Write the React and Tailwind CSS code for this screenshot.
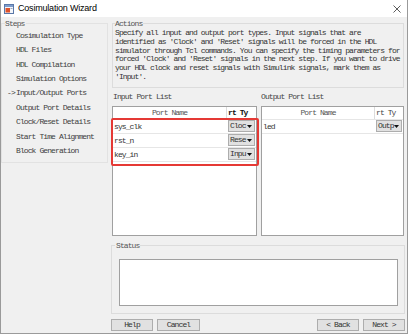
const mono = "font-['Liberation_Mono',monospace] text-[8px] tracking-[-0.9px]";

const steps = [
  "Cosimulation Type",
  "HDL Files",
  "HDL Compilation",
  "Simulation Options",
  "Input/Output Ports",
  "Output Port Details",
  "Clock/Reset Details",
  "Start Time Alignment",
  "Block Generation",
];

const actionLines = [
  "Specify all input and output port types. Input signals that are",
  "identified as 'Clock' and 'Reset' signals will be forced in the HDL",
  "simulator through Tcl commands. You can specify the timing parameters for",
  "forced 'Clock' and 'Reset' signals in the next step. If you want to drive",
  "your HDL clock and reset signals with Simulink signals, mark them as",
  "'Input'.",
];

function Arrow() {
  return (
    <svg width="5" height="3" viewBox="0 0 5 3" className="shrink-0">
      <path d="M0 0 L5 0 L2.5 3 Z" fill="#111" />
    </svg>
  );
}

function Combo({ text }) {
  return (
    <div className="h-[12px] w-full border border-[#adadad] bg-[#e1e1e1] flex items-center pl-[1px] pr-[2px]">
      <span className="whitespace-pre text-[#333] leading-[10px]">{text}</span>
      <div className="flex-1" />
      <Arrow />
    </div>
  );
}

function PortTable({ width, nameW, rows, headBold, children }) {
  return (
    <div className={"relative h-[130px] border border-[#a0a0a0] bg-white " + width}>
      <div className="flex h-[13px] border-b border-[#e6e6e6]">
        <div className={"flex items-center justify-center border-r border-[#dcdcdc] text-[#555] " + nameW}>Port Name</div>
        <div className={"flex-1 flex items-center pl-[1px] whitespace-pre " + (headBold ? "font-bold text-[#111]" : "text-[#444]")}>rt Ty</div>
      </div>
      {rows.map((r) => (
        <div key={r[0]} className="flex h-[14px] border-b border-[#e6e6e6]">
          <div className={"flex items-center pl-[1px] text-[#333] " + nameW}>{r[0]}</div>
          <div className="flex-1 pl-[1px] pr-[1px]">
            <Combo text={r[1]} />
          </div>
        </div>
      ))}
      {children}
    </div>
  );
}

function Btn({ label, w }) {
  return (
    <div className={"h-[12px] border border-[#adadad] bg-[#e1e1e1] flex items-center justify-center text-[#333] leading-[10px] whitespace-pre " + w}>
      {label}
    </div>
  );
}

export default function App() {
  return (
    <div className="w-[408px] h-[334px] flex flex-col bg-[#f0f0f0] border-x border-b border-[#9a9a9a] overflow-hidden">
      {/* Title bar */}
      <div className="h-[17px] bg-white flex items-center shrink-0">
        <svg width="10" height="10" viewBox="0 0 10 10" className="ml-[3px]">
          <rect x="0.5" y="0.5" width="9" height="9" fill="#f4f6fa" stroke="#5a78a8" />
          <rect x="1" y="1" width="8" height="2" fill="#7d9ccb" />
          <rect x="1.5" y="4" width="4.5" height="4.5" fill="#e0522a" />
          <rect x="6.5" y="4" width="2" height="1" fill="#9aa8c0" />
        </svg>
        <span className="ml-[4px] font-['Liberation_Sans',sans-serif] text-[9px] tracking-[-0.2px] text-black leading-[11px]">
          Cosimulation Wizard
        </span>
        <div className="flex-1" />
        <svg width="8" height="8" viewBox="0 0 8 8" className="mr-[6px]">
          <path d="M0.5 0.5 L7.5 7.5 M7.5 0.5 L0.5 7.5" stroke="#333" strokeWidth="0.8" />
        </svg>
      </div>

      {/* Body */}
      <div className={"flex-1 flex flex-col " + mono}>
        <div className="flex mt-[6px]">
          {/* Steps */}
          <div className="relative w-[107px] h-[140px] border border-[#e2e2e2] mr-[4px] pt-[4.5px] text-[#404040]">
            <span className="absolute left-[3px] -top-[5.5px] leading-[9px] bg-[#f0f0f0] pr-[1px] text-[#555]">Steps</span>
            {steps.map((s, i) => (
              <div key={s} className="flex h-[14.45px] items-center whitespace-pre">
                <span className="w-[14px] pl-[5px] shrink-0">{i === 4 ? "->" : ""}</span>
                <span>{s}</span>
              </div>
            ))}
          </div>

          {/* Right column */}
          <div className="flex flex-col w-[292px]">
            {/* Actions */}
            <div className="relative h-[65px] border border-[#dcdcdc] pl-[2px] pt-[5px] text-[#333]">
              <span className="absolute left-[2px] -top-[5.5px] leading-[9px] bg-[#f0f0f0] pr-[1px] text-[#555] whitespace-pre">Actions</span>
              <div>
                {actionLines.map((l, i) => (
                  <div key={i} className="h-[8.8px] leading-[8.8px] whitespace-pre">{l}</div>
                ))}
              </div>
            </div>

            {/* Port lists */}
            <div className="flex gap-[4px]">
              <div className="flex flex-col">
                <div className="h-[18px] flex items-center pl-[1px] text-[#444]">Input Port List</div>
                <PortTable
                  width="w-[145px]"
                  nameW="w-[114px]"
                  headBold
                  rows={[["sys_clk", "Cloc"], ["rst_n", "Rese"], ["key_in", "Inpu"]]}
                >
                  <div className="absolute -left-[2px] top-[11px] w-[148px] h-[48px] border-2 border-[#e53935] rounded-[2px]" />
                </PortTable>
              </div>
              <div className="flex flex-col">
                <div className="h-[18px] flex items-center text-[#444]">Output Port List</div>
                <PortTable
                  width="w-[143px]"
                  nameW="w-[113px]"
                  rows={[["led", "Outp"]]}
                />
              </div>
            </div>

            {/* Status */}
            <div className="relative mt-[9px] -ml-[1px] w-[294px] h-[69px] border border-[#dcdcdc]">
              <span className="absolute left-[3px] -top-[5px] leading-[9px] bg-[#f0f0f0] px-[1px] text-[#555]">Status</span>
              <div className="ml-[7px] mt-[13px] w-[279px] h-[47px] border border-[#a0a0a0] bg-white" />
            </div>
          </div>
        </div>

        {/* Buttons */}
        <div className="flex mt-[5px] ml-[110px] w-[294px]">
          <Btn label="Help" w="w-[42px]" />
          <div className="ml-[4px]">
            <Btn label="Cancel" w="w-[43px]" />
          </div>
          <div className="flex-1" />
          <Btn label="< Back" w="w-[42px]" />
          <div className="ml-[4px]">
            <Btn label="Next >" w="w-[42px]" />
          </div>
        </div>
      </div>
    </div>
  );
}
